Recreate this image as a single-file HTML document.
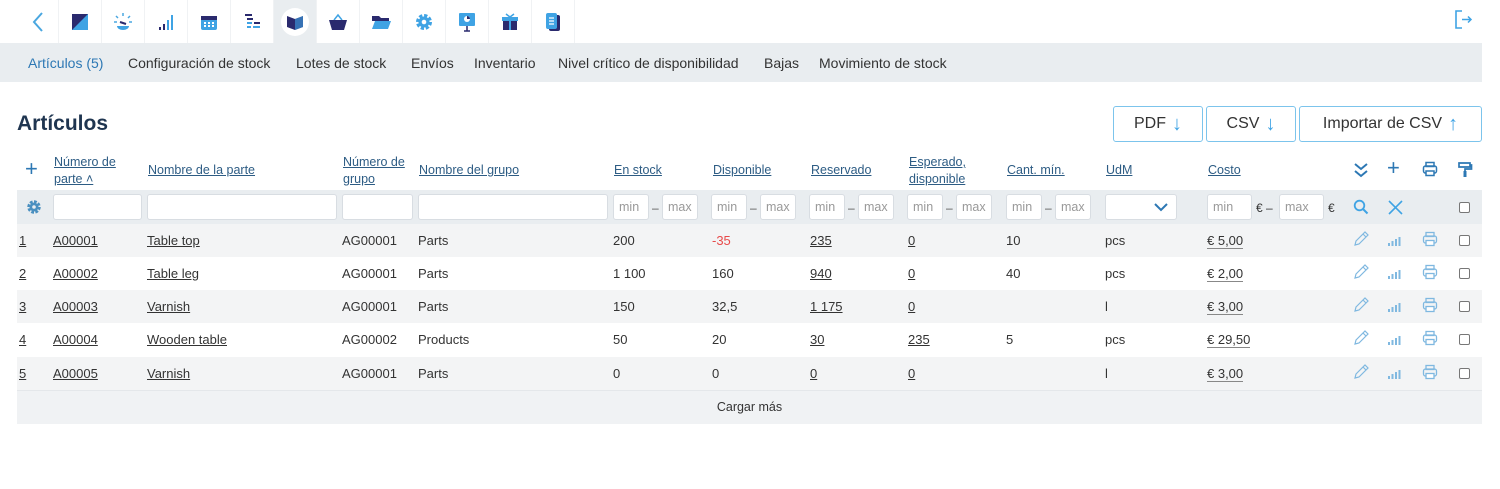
<!DOCTYPE html>
<html><head><meta charset="utf-8"><style>
*{box-sizing:border-box;margin:0;padding:0}
body{width:1500px;height:489px;background:#fff;font-family:"Liberation Sans",sans-serif;color:#333;position:relative;overflow:hidden;font-size:13px}
.a{position:absolute}
.tb{position:absolute;top:0;height:43px;width:43px;border-right:1px solid #f0f2f4;display:flex;align-items:center;justify-content:center}
.tabs{position:absolute;left:0;top:43px;width:1482px;height:39px;background:#e9edf0}
.tabs span{position:absolute;top:12px;font-size:14px;color:#333}
.btn{position:absolute;top:106px;height:36px;border:1px solid #7cc4ec;border-radius:3px;font-size:16px;color:#333;display:flex;align-items:center;justify-content:center;gap:6px}
.h{position:absolute;font-size:12.5px;color:#2d5c84;text-decoration:underline;line-height:17px}
.band{position:absolute;left:17px;width:1465px}
.in{position:absolute;top:194px;height:26px;background:#fff;border:1px solid #d8dde2;border-radius:3px;font-size:12.5px;color:#999;padding:5px 5px}
.c{position:absolute;font-size:13px;color:#333}
.u{text-decoration:underline}
.cb{position:absolute;width:11px;height:11px;border:1px solid #777;border-radius:2px;background:#fff}
.dash{position:absolute;top:201px;font-size:12px;color:#555}
</style></head><body>
<!-- toolbar -->
<div class="tb" style="left:17px;width:42px"><svg width="14" height="22"><path d="M11 2 L3 11 L11 20" stroke="#4aa7e0" stroke-width="2" fill="none"/></svg></div>
<div class="tb" style="left:59px"><svg width="20" height="20"><path d="M2 2h16v16H2z" fill="#2a2a6e"/><path d="M18 2v16H2z" fill="#3fa3e4"/></svg></div>
<div class="tb" style="left:102px"><svg width="22" height="22"><g stroke="#4aa7e0" stroke-width="1.5"><path d="M11 2v3M4 5l2 2M18 5l-2 2M2 11h3M20 11h-3"/></g><path d="M8 11l6 2" stroke="#2a2a6e" stroke-width="2"/><path d="M5 15h12a6 4 0 0 1-12 0z" fill="#3fa3e4"/></svg></div>
<div class="tb" style="left:145px"><svg width="20" height="20"><g fill="#2a2a6e"><rect x="3" y="15" width="2" height="3"/><rect x="7" y="12" width="2" height="6"/></g><g fill="#3fa3e4"><rect x="11" y="8" width="2" height="10"/><rect x="15" y="3" width="2" height="15"/></g></svg></div>
<div class="tb" style="left:188px"><svg width="20" height="20"><rect x="2" y="4" width="16" height="14" rx="2" fill="#3fa3e4"/><rect x="2" y="4" width="16" height="4" fill="#2a2a6e"/><g fill="#fff"><rect x="5" y="10" width="2" height="2"/><rect x="9" y="10" width="2" height="2"/><rect x="13" y="10" width="2" height="2"/><rect x="5" y="13" width="2" height="2"/><rect x="9" y="13" width="2" height="2"/><rect x="13" y="13" width="2" height="2"/></g></svg></div>
<div class="tb" style="left:231px"><svg width="20" height="20"><g fill="#2a2a6e"><rect x="3" y="2" width="7" height="2"/><rect x="5" y="6" width="6" height="2"/><rect x="12" y="10" width="6" height="2"/></g><g fill="#3fa3e4"><rect x="5" y="10" width="5" height="2"/><rect x="5" y="14" width="4" height="2"/><rect x="11" y="14" width="7" height="2"/></g></svg></div>
<div class="tb" style="left:274px;background:#e9edf0"><div style="width:28px;height:28px;border-radius:14px;background:#fff;display:flex;align-items:center;justify-content:center"><svg width="20" height="20"><path d="M2 4l8 3v11l-8-3z" fill="#2a2a6e"/><path d="M18 4l-8 3v11l8-3z" fill="#2a2a6e"/><path d="M10 7l8-3v11l-8 3z" fill="#3fa3e4" opacity=".6"/></svg></div></div>
<div class="tb" style="left:317px"><svg width="22" height="20"><path d="M7 8l4-5 4 5" stroke="#3fa3e4" stroke-width="1.5" fill="none"/><path d="M2 8h18l-3 10H5z" fill="#2a2a6e"/></svg></div>
<div class="tb" style="left:360px"><svg width="22" height="18"><path d="M2 3h7l2 2h8v3H2z" fill="#2a2a6e"/><path d="M2 16l3-8h16l-3 8z" fill="#3fa3e4"/></svg></div>
<div class="tb" style="left:403px"><svg width="20" height="20"><circle cx="10" cy="10" r="6" fill="none" stroke="#3fa3e4" stroke-width="4" stroke-dasharray="3 1.7"/><circle cx="10" cy="10" r="5.5" fill="#3fa3e4"/><circle cx="10" cy="10" r="2.3" fill="#fff"/></svg></div>
<div class="tb" style="left:446px"><svg width="20" height="22"><rect x="2" y="2" width="16" height="13" rx="1" fill="#3fa3e4"/><circle cx="10" cy="8" r="3" fill="#fff"/><path d="M10 8V5A3 3 0 0 1 13 8z" fill="#2a2a6e"/><path d="M10 15v5M7 20h6" stroke="#2a2a6e" stroke-width="1.5"/></svg></div>
<div class="tb" style="left:489px"><svg width="20" height="20"><rect x="3" y="7" width="14" height="11" fill="#2a2a6e"/><rect x="2" y="5" width="16" height="4" fill="#3fa3e4"/><rect x="9" y="5" width="2" height="13" fill="#3fa3e4"/><path d="M6 2l4 3 4-3" stroke="#3fa3e4" stroke-width="1.5" fill="none"/></svg></div>
<div class="tb" style="left:532px"><svg width="20" height="22"><rect x="6" y="4" width="11" height="16" rx="2" fill="#2a2a6e"/><rect x="3" y="2" width="11" height="16" rx="2" fill="#3fa3e4"/><g stroke="#fff" stroke-width="1.3"><path d="M6 7h5M6 10h5M6 13h5"/></g></svg></div>
<svg class="a" style="left:1453px;top:9px" width="22" height="22"><path d="M9 2H3v17h6" stroke="#3fa3e4" stroke-width="1.6" fill="none"/><path d="M9 10.5h9M15 7.5l3 3-3 3" stroke="#3fa3e4" stroke-width="1.5" fill="none"/></svg>
<!-- tabs -->
<div class="tabs">
<span style="left:28px;color:#2d78b4">Artículos (5)</span>
<span style="left:128px">Configuración de stock</span>
<span style="left:296px">Lotes de stock</span>
<span style="left:411px">Envíos</span>
<span style="left:474px">Inventario</span>
<span style="left:558px">Nivel crítico de disponibilidad</span>
<span style="left:764px">Bajas</span>
<span style="left:819px">Movimiento de stock</span>
</div>
<div class="a" style="left:17px;top:112px;font-size:21px;font-weight:bold;color:#1f3550">Artículos</div>
<div class="btn" style="left:1113px;width:90px">PDF <span style="color:#3fa3e4;font-size:20px">↓</span></div>
<div class="btn" style="left:1206px;width:90px">CSV <span style="color:#3fa3e4;font-size:20px">↓</span></div>
<div class="btn" style="left:1299px;width:183px">Importar de CSV <span style="color:#3fa3e4;font-size:20px">↑</span></div>
<!-- headers -->
<div class="a" style="left:25px;top:158px;font-size:22px;color:#2d78b4;line-height:22px">+</div>
<div class="h" style="left:54px;top:154px">Número de<br>parte<span style="text-decoration:none"> ˄</span></div>
<div class="h" style="left:148px;top:162px">Nombre de la parte</div>
<div class="h" style="left:343px;top:154px">Número de<br>grupo</div>
<div class="h" style="left:419px;top:162px">Nombre del grupo</div>
<div class="h" style="left:614px;top:162px">En stock</div>
<div class="h" style="left:713px;top:162px">Disponible</div>
<div class="h" style="left:811px;top:162px">Reservado</div>
<div class="h" style="left:909px;top:154px">Esperado,<br>disponible</div>
<div class="h" style="left:1007px;top:162px">Cant. mín.</div>
<div class="h" style="left:1106px;top:162px">UdM</div>
<div class="h" style="left:1208px;top:162px">Costo</div>
<svg class="a" style="left:1353px;top:162px" width="16" height="16"><path d="M2 2l6 5 6-5M2 9l6 5 6-5" stroke="#2d78b4" stroke-width="2" fill="none"/></svg>
<div class="a" style="left:1387px;top:157px;font-size:22px;color:#2d78b4;line-height:22px">+</div>
<svg class="a" style="left:1422px;top:161px" width="16" height="16"><rect x="4" y="1.5" width="8" height="4" fill="none" stroke="#2d78b4" stroke-width="1.5"/><rect x="1.5" y="5" width="13" height="7" rx="2" fill="none" stroke="#2d78b4" stroke-width="1.5"/><rect x="4" y="10" width="8" height="4.5" fill="#fff" stroke="#2d78b4" stroke-width="1.5"/></svg>
<svg class="a" style="left:1457px;top:161px" width="16" height="17"><path d="M2 2h11v4H2zM13 4h1.5v4H8v3" stroke="#2d78b4" stroke-width="1.7" fill="none"/><rect x="6.5" y="10" width="3" height="6" fill="#2d78b4"/></svg>
<!-- filter row -->
<div class="band" style="top:190px;height:34px;background:#e9edf0"></div>
<svg class="a" style="left:26px;top:199px" width="16" height="16"><circle cx="8" cy="8" r="5" fill="none" stroke="#4a90c0" stroke-width="3.5" stroke-dasharray="2.6 1.3"/><circle cx="8" cy="8" r="4.5" fill="#4a90c0"/><circle cx="8" cy="8" r="1.8" fill="#e9edf0"/></svg>
<div class="in" style="left:53px;width:89px"></div>
<div class="in" style="left:147px;width:190px"></div>
<div class="in" style="left:342px;width:71px"></div>
<div class="in" style="left:418px;width:190px"></div>
<div class="in" style="left:613px;width:36px">min</div><div class="dash" style="left:652px">–</div><div class="in" style="left:662px;width:36px">max</div>
<div class="in" style="left:711px;width:36px">min</div><div class="dash" style="left:750px">–</div><div class="in" style="left:760px;width:36px">max</div>
<div class="in" style="left:809px;width:36px">min</div><div class="dash" style="left:848px">–</div><div class="in" style="left:858px;width:36px">max</div>
<div class="in" style="left:907px;width:36px">min</div><div class="dash" style="left:946px">–</div><div class="in" style="left:956px;width:36px">max</div>
<div class="in" style="left:1006px;width:36px">min</div><div class="dash" style="left:1045px">–</div><div class="in" style="left:1055px;width:36px">max</div>
<div class="in" style="left:1105px;width:72px"><svg style="position:absolute;right:8px;top:8px" width="14" height="9"><path d="M1 1l6 6 6-6" stroke="#2d78b4" stroke-width="2" fill="none"/></svg></div>
<div class="in" style="left:1207px;width:45px">min</div><div class="dash" style="left:1256px;color:#333">€ –</div>
<div class="in" style="left:1279px;width:45px">max</div><div class="dash" style="left:1328px;color:#333">€</div>
<svg class="a" style="left:1353px;top:199px" width="16" height="16"><circle cx="6.5" cy="6.5" r="4.8" fill="none" stroke="#3fa3e4" stroke-width="1.8"/><path d="M10 10l4.5 4.5" stroke="#3fa3e4" stroke-width="2"/></svg>
<svg class="a" style="left:1388px;top:200px" width="15" height="15"><path d="M1 1l13 13M14 1L1 14" stroke="#3fa3e4" stroke-width="1.6"/></svg>
<div class="cb" style="left:1459px;top:202px"></div>
<!-- rows -->
<div class="band" style="top:224px;height:33px;background:#f3f4f5"></div>
<div class="band" style="top:290px;height:33px;background:#f3f4f5"></div>
<div class="band" style="top:357px;height:33px;background:#f3f4f5"></div>
<div class="band" style="top:390px;height:34px;background:#f0f2f4;border-top:1px solid #e4e7ea"></div>
<div class="a" style="left:17px;top:400px;width:1465px;text-align:center;font-size:12.5px">Cargar más</div>
<div id="rows"></div>
<script>
var d=[["1","A00001","Table top","AG00001","Parts","200","-35","235","0","10","pcs","€ 5,00"],
["2","A00002","Table leg","AG00001","Parts","1 100","160","940","0","40","pcs","€ 2,00"],
["3","A00003","Varnish","AG00001","Parts","150","32,5","1 175","0","","l","€ 3,00"],
["4","A00004","Wooden table","AG00002","Products","50","20","30","235","5","pcs","€ 29,50"],
["5","A00005","Varnish","AG00001","Parts","0","0","0","0","","l","€ 3,00"]];
var xs=[19,53,147,342,418,613,712,810,908,1006,1105,1207],ul=[1,1,1,0,0,0,0,1,1,0,0,1];
var ys=[233,266,299,332,366],h="";
d.forEach(function(r,i){var y=ys[i];r.forEach(function(v,j){var st="left:"+xs[j]+"px;top:"+y+"px;";if(j==6&&v[0]=="-")st+="color:#e84a4a;";var cl="c"+(ul[j]?" u":"");if(j==11)st+="text-decoration:none;border-bottom:1px solid #888;line-height:15px;";h+='<div class="'+cl+'" style="'+st+'">'+v+'</div>';});
h+='<svg class="a" style="left:1353px;top:'+(y-2)+'px" width="16" height="16"><path d="M2 14l1-4 9-9 3 3-9 9z M10 3l3 3" stroke="#7fb8e0" stroke-width="1.2" fill="none"/></svg>';
h+='<svg class="a" style="left:1387px;top:'+(y+2)+'px" width="14" height="12"><g fill="#7fb8e0"><rect x="1" y="8" width="2" height="3"/><rect x="4.5" y="6" width="2" height="5"/><rect x="8" y="4" width="2" height="7"/><rect x="11.5" y="2" width="2" height="9"/></g></svg>';
h+='<svg class="a" style="left:1422px;top:'+(y-2)+'px" width="16" height="16"><rect x="4" y="1.5" width="8" height="4" fill="none" stroke="#7fb8e0" stroke-width="1.3"/><rect x="1.5" y="5" width="13" height="7" rx="2" fill="none" stroke="#7fb8e0" stroke-width="1.3"/><rect x="4" y="9.5" width="8" height="5" fill="#fff" stroke="#7fb8e0" stroke-width="1.3"/></svg>';
h+='<div class="cb" style="left:1459px;top:'+(y+2)+'px"></div>';});
document.getElementById("rows").innerHTML=h;
</script>
</body></html>
